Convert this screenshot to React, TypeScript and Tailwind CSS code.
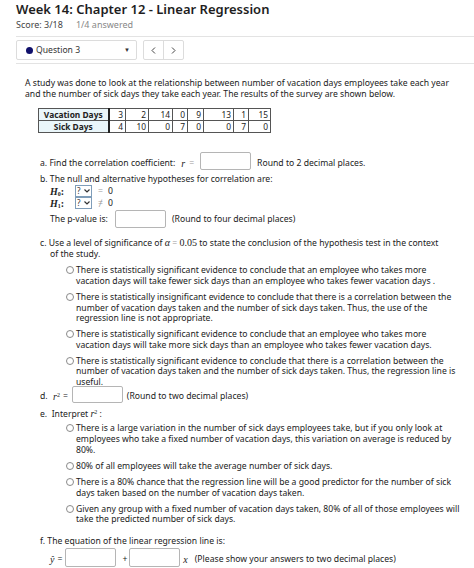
import React from "react";

const font = { fontFamily: '"Noto Sans", "Liberation Sans", sans-serif' };

function Radio() {
  return (
    <span className="mt-[1px] inline-block h-[8px] w-[8px] shrink-0 rounded-full border border-[#8a8a8a] bg-white" />
  );
}

function Option({ children }: { children: React.ReactNode }) {
  return (
    <div className="flex gap-[2px] pl-[26px]">
      <Radio />
      <div className="leading-[10.6px]">{children}</div>
    </div>
  );
}

function Input({ h = "h-[18px]" }: { h?: string }) {
  return <span className={`inline-block w-[51px] ${h} shrink-0 rounded-[2px] border border-[#b5b5b5] bg-white`} />;
}

function Sel() {
  return (
    <span className="inline-flex h-[12px] w-[17px] items-center justify-between border border-[#7f9db9] bg-white px-[1px] text-[8px] leading-none text-[#333]">
      <span>?</span>
      <svg width="6" height="4" viewBox="0 0 6 4"><path d="M0.5 0.5 L3 3 L5.5 0.5" fill="none" stroke="#333" strokeWidth="1.2" /></svg>
    </span>
  );
}

const M = ({ children }: { children: React.ReactNode }) => (
  <span className="italic" style={{ fontFamily: '"Liberation Serif", "DejaVu Serif", serif' }}>{children}</span>
);

const VCELLS = [
  { v: "3", s: "4", w: "w-[17px]" },
  { v: "2", s: "10", w: "w-[23px]" },
  { v: "14", s: "0", w: "w-[24px]" },
  { v: "0", s: "7", w: "w-[15px]" },
  { v: "9", s: "0", w: "w-[16px]" },
  { v: "13", s: "0", w: "w-[30px]" },
  { v: "1", s: "7", w: "w-[15px]" },
  { v: "15", s: "0", w: "w-[22px]" },
];

export default function App() {
  return (
    <div className="h-[568px] w-[474px] overflow-hidden bg-white text-[8.65px] text-[#222]" style={font}>
      <div className="pl-4">
        <div className="pt-[1px] text-[13px] font-semibold leading-[17px] text-[#1e1e1e]">
          Week 14: Chapter 12 - Linear Regression
        </div>
        <div className="mt-[2px] flex gap-[13px] text-[9px] leading-[10px]">
          <span className="text-[#444]">Score: 3/18</span>
          <span className="text-[#888]">1/4 answered</span>
        </div>
        <div className="mt-[6px] h-px bg-[#e3e3e3]" />
        <div className="mt-[3px] flex gap-[6px]">
          <div className="flex h-[20px] w-[121px] items-center rounded-[2px] border border-[#dcdcdc] pl-[9px] pr-[6px]">
            <span className="h-[7px] w-[7px] rounded-full bg-[#10106b]" />
            <span className="ml-[3px] text-[#333]">Question 3</span>
            <span className="ml-auto text-[6px] text-[#333]">▼</span>
          </div>
          <div className="flex h-[20px] w-[41px] rounded-[2px] border border-[#dcdcdc]">
            <div className="flex flex-1 items-center justify-center border-r border-[#dcdcdc]">
              <svg width="5" height="7" viewBox="0 0 5 7"><path d="M4 0.5 L1 3.5 L4 6.5" fill="none" stroke="#444" strokeWidth="1" /></svg>
            </div>
            <div className="flex flex-1 items-center justify-center">
              <svg width="5" height="7" viewBox="0 0 5 7"><path d="M1 0.5 L4 3.5 L1 6.5" fill="none" stroke="#444" strokeWidth="1" /></svg>
            </div>
          </div>
        </div>
        <div className="mt-[3px] h-px bg-[#e3e3e3]" />

        <div className="pl-[9px] pt-[14px] leading-[10.6px]">
          <p>A study was done to look at the relationship between number of vacation days employees take each year</p>
          <p>and the number of sick days they take each year. The results of the survey are shown below.</p>
        </div>

        <table className="ml-[22px] mt-[9px] w-[232px] table-fixed border-collapse border border-[#555] text-[8.4px] leading-[11px]">
          <colgroup>
            <col className="w-[70px]" />
            {VCELLS.map((c, i) => (
              <col key={i} className={c.w} />
            ))}
          </colgroup>
          <tbody>
            <tr className="h-[12px]">
              <td className="w-[70px] border border-[#555] border-r-2 border-r-[#222] bg-[#eaf6fa] p-0 text-center font-bold text-[#222]">Vacation Days</td>
              {VCELLS.map((c, i) => (
                <td key={i} className={`${c.w} border border-[#555] p-0 pr-[2px] text-right`}>{c.v}</td>
              ))}
            </tr>
            <tr className="h-[12px]">
              <td className="border border-[#555] border-r-2 border-r-[#222] bg-[#eaf6fa] p-0 text-center font-bold text-[#222]">Sick Days</td>
              {VCELLS.map((c, i) => (
                <td key={i} className="border border-[#555] p-0 pr-[2px] text-right">{c.s}</td>
              ))}
            </tr>
          </tbody>
        </table>

        <div className="pl-[24px]">
          <div className="mt-[19px] flex items-center">
            <span>a. Find the correlation coefficient:</span>
            <span className="ml-[6px]"><M><span className="text-[10px]">r</span></M></span>
            <span className="ml-[4px] text-[#999]">=</span>
            <span className="ml-[6px]"><Input /></span>
            <span className="ml-[6px]">Round to 2 decimal places.</span>
          </div>
          <div className="leading-[11px]">b. The null and alternative hypotheses for correlation are:</div>
          <div className="pl-[10px]">
            <div className="flex h-[12px] items-center">
              <span className="w-[25px] text-[10px] font-bold" style={{ fontFamily: '"Liberation Serif", serif' }}><i>H</i><sub className="text-[6px]">0</sub>:</span>
              <Sel />
              <span className="ml-[6px] text-[#999]">=</span>
              <span className="ml-[5px]">0</span>
            </div>
            <div className="flex h-[12px] items-center">
              <span className="w-[25px] text-[10px] font-bold" style={{ fontFamily: '"Liberation Serif", serif' }}><i>H</i><sub className="text-[6px]">1</sub>:</span>
              <Sel />
              <span className="ml-[6px] text-[#999]">≠</span>
              <span className="ml-[5px]">0</span>
            </div>
            <div className="mt-[1px] flex items-center">
              <span className="w-[65px]">The p-value is:</span>
              <Input />
              <span className="ml-[6px]">(Round to four decimal places)</span>
            </div>
          </div>

          <div className="mt-[10px] leading-[10.6px]">
            <div>
              c. Use a level of significance of <M><span className="text-[10px]">α</span></M> <span className="text-[#999]">=</span>{" "}
              <span className="text-[10px]" style={{ fontFamily: '"Liberation Serif", serif' }}>0.05</span> to state the conclusion of the hypothesis test in the context
            </div>
            <div className="pl-[10px]">of the study.</div>
          </div>

          <div className="mt-[6px] flex flex-col gap-[5.4px]">
            <Option>
              There is statistically significant evidence to conclude that an employee who takes more<br />
              vacation days will take fewer sick days than an employee who takes fewer vacation days .
            </Option>
            <Option>
              There is statistically insignificant evidence to conclude that there is a correlation between the<br />
              number of vacation days taken and the number of sick days taken. Thus, the use of the<br />
              regression line is not appropriate.
            </Option>
            <Option>
              There is statistically significant evidence to conclude that an employee who takes more<br />
              vacation days will take more sick days than an employee who takes fewer vacation days.
            </Option>
            <Option>
              There is statistically significant evidence to conclude that there is a correlation between the<br />
              number of vacation days taken and the number of sick days taken. Thus, the regression line is<br />
              useful.
            </Option>
          </div>

          <div className="mt-[-1px] flex items-center">
            <span className="w-[13px]">d.</span>
            <M><span className="text-[10px]">r</span><sup className="text-[6px] not-italic">2</sup></M>
            <span className="ml-[3px]">=</span>
            <span className="ml-[4px]"><Input h="h-[17px]" /></span>
            <span className="ml-[4px]">(Round to two decimal places)</span>
          </div>
          <div className="mt-[1px] flex items-center leading-[11px]">
            <span>e.&nbsp; Interpret&nbsp;</span>
            <M><span className="text-[10px]">r</span><sup className="text-[6px] not-italic">2</sup></M>
            <span>&nbsp;:</span>
          </div>

          <div className="mt-[3px] flex flex-col gap-[5.6px]">
            <Option>
              There is a large variation in the number of sick days employees take, but if you only look at<br />
              employees who take a fixed number of vacation days, this variation on average is reduced by<br />
              80%.
            </Option>
            <Option>80% of all employees will take the average number of sick days.</Option>
            <Option>
              There is a 80% chance that the regression line will be a good predictor for the number of sick<br />
              days taken based on the number of vacation days taken.
            </Option>
            <Option>
              Given any group with a fixed number of vacation days taken, 80% of all of those employees will<br />
              take the predicted number of sick days.
            </Option>
          </div>

          <div className="mt-[11px] leading-[11px]">f. The equation of the linear regression line is:</div>
          <div className="mt-[1px] flex items-center pl-[10px]">
            <M><span className="text-[10px]">ŷ</span></M>
            <span className="ml-[3px]">=</span>
            <span className="ml-[3px]"><Input h="h-[19px]" /></span>
            <span className="ml-[6px]">+</span>
            <span className="ml-[2px]"><Input h="h-[19px]" /></span>
            <span className="ml-[3px]"><M><span className="text-[10px]">x</span></M></span>
            <span className="ml-[7px]">(Please show your answers to two decimal places)</span>
          </div>
        </div>
        <div className="ml-[64px] h-[4px] bg-[#d9dbe3]" />
      </div>
    </div>
  );
}
